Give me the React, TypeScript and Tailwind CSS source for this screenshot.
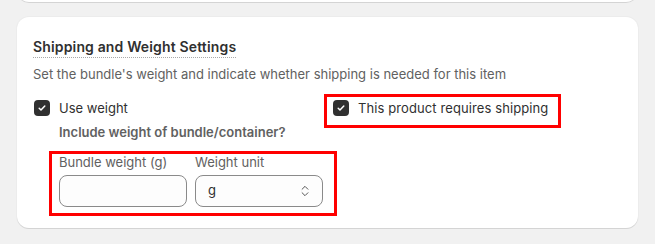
import { ChevronsUpDown } from 'lucide-react'

function Check({ className = '' }: { className?: string }) {
  return (
    <span
      className={`flex h-4 w-4 shrink-0 items-center justify-center rounded-[4px] bg-[#303030] ${className}`}
    >
      <svg width="10" height="10" viewBox="0 0 10 10" fill="none">
        <path
          d="M2.2 5.2l1.8 1.8 3.8-4"
          stroke="white"
          strokeWidth="1.5"
          strokeLinecap="round"
          strokeLinejoin="round"
        />
      </svg>
    </span>
  )
}

export default function App() {
  return (
    <div
      className="h-[244px] w-[655px] overflow-hidden bg-[#f1f1f1] text-[#303030]"
      style={{ fontFamily: 'Inter, "Noto Sans", sans-serif' }}
    >
      <div className="mx-[17px] -mt-[20px] h-[22px] rounded-b-xl bg-white shadow-[0_1px_0_0_#d4d4d4]" />

      <div className="mx-[17px] mt-[15px] rounded-xl bg-white px-4 pb-[12px] pt-[17px] shadow-[0_1px_0_0_#d4d4d4,0_0_0_1px_#ececec]">
        <h2 className="inline-block border-b border-dotted border-[#a8a8a8] text-[14px] font-semibold leading-[20px] tracking-[0.15px]">
          Shipping and Weight Settings
        </h2>
        <p className="mt-[6px] text-[13px] leading-[20px] text-[#616161]">
          Set the bundle's weight and indicate whether shipping is needed for this item
        </p>

        <div className="mt-[10px] flex">
          <div className="w-[291px] pt-[4px]">
            <label className="flex items-center gap-[9px] text-[13px] leading-[20px]">
              <Check className="ml-px" />
              Use weight
            </label>
            <p className="ml-[26px] mt-[4px] text-[13px] font-semibold leading-[20px] text-[#616161]">
              Include weight of bundle/container?
            </p>
            <div className="ml-[16px] mt-[9px] w-[288px] border-[3px] border-[#ff0000] px-[7px] pb-[6px]">
              <div className="flex gap-[8px]">
                <div className="w-[128px]">
                  <div className="text-[13px] leading-[16px] text-[#616161]">Bundle weight (g)</div>
                  <input className="mt-[5px] h-[32px] w-full rounded-lg border border-[#8a8a8a] bg-[#fdfdfd] px-3 text-[13px] outline-none" />
                </div>
                <div className="w-[128px]">
                  <div className="text-[13px] leading-[16px] text-[#616161]">Weight unit</div>
                  <div className="mt-[5px] flex h-[32px] items-center justify-between rounded-lg border border-[#8a8a8a] bg-[#fdfdfd] pl-3 pr-[10px] text-[13px]">
                    <span>g</span>
                    <ChevronsUpDown size={14} strokeWidth={1.6} className="text-[#4a4a4a]" />
                  </div>
                </div>
              </div>
            </div>
          </div>

          <div className="self-start">
            <label className="block h-[34px] border-[3px] border-[#ff0000] pl-[6px] pr-[10px] pt-[1px] text-[13px] leading-[20px] tracking-[0.1px]">
              <span className="flex h-[20px] items-center gap-[9px]">
                <Check />
                This product requires shipping
              </span>
            </label>
          </div>
        </div>
      </div>

      <div className="mx-[17px] mt-[16px] h-[20px] rounded-t-xl bg-white" />
    </div>
  )
}
